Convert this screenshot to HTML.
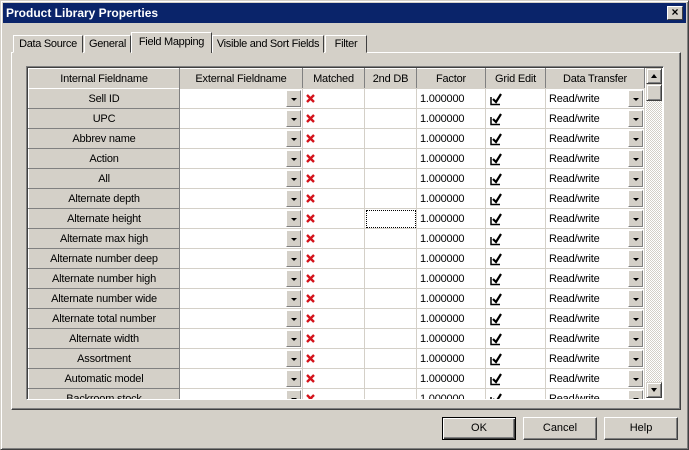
<!DOCTYPE html>
<html><head><style>
*{box-sizing:border-box;margin:0;padding:0}
body{width:689px;height:450px;background:#d4d0c8;font-family:"Liberation Sans",sans-serif;font-size:11px;color:#000;position:relative;overflow:hidden}
.win{position:absolute;left:0;top:0;width:689px;height:450px;border:1px solid #d4d0c8;border-right-color:#404040;border-bottom-color:#404040;box-shadow:inset 1px 1px #fff,inset -1px -1px #808080}
.title{position:absolute;left:3px;top:3px;width:683px;height:20px;background:#0a246a;color:#fff;font-weight:bold;font-size:12px;line-height:20px;padding-left:3px}
.close{position:absolute;left:667px;top:6px;width:16px;height:14px;background:#d4d0c8;border:1px solid;border-color:#fff #404040 #404040 #fff;font-size:12px;line-height:11px;text-align:center;color:#000;font-weight:bold}
.tab{position:absolute;top:35px;height:18px;border:1px solid;border-color:#fff #404040 transparent #fff;line-height:16px;text-align:center;background:#d4d0c8;white-space:nowrap;overflow:hidden;letter-spacing:-0.3px}
.panel{position:absolute;left:11px;top:52px;width:670px;height:358px;border:1px solid;border-color:#fff #404040 #404040 #fff;box-shadow:inset -1px -1px #808080}
.grid{position:absolute;left:26px;top:66px;width:638px;height:334px;border:1px solid;border-color:#808080 #fff #fff #808080;overflow:hidden;background:#fff}
.gin{position:absolute;left:0;top:0;width:636px;height:332px;border:1px solid #404040;border-right:none;border-bottom:none;overflow:hidden}
table{border-collapse:collapse;table-layout:fixed;position:absolute;left:0;top:0}
td{height:20px;border:1px solid #d4d0c8;padding:0;white-space:nowrap;overflow:hidden;position:relative;letter-spacing:-0.2px}
tr.h td{background:#d4d0c8;text-align:center;border-color:#fff #808080 #808080 #fff}
td.i{background:#d4d0c8;text-align:center;border-color:#fff #808080 #808080 #fff}
.dd{position:absolute;right:1px;top:1px;width:15px;height:17px;background:#d4d0c8;border:1px solid;border-color:#fff #808080 #808080 #fff}
.dd:after{content:"";position:absolute;left:4px;top:7px;border:3px solid transparent;border-top:3px solid #000;border-bottom:0}
.x{position:absolute;left:3px;top:5px}
.ck{position:absolute;left:4px;top:4px}
.t{padding-left:3px}
.sb{position:absolute;left:646px;top:68px;width:16px;height:330px;background:repeating-conic-gradient(#fff 0 25%,#d4d0c8 0 50%) 0 0/2px 2px}
.sbb{position:absolute;left:0;width:16px;height:16px;background:#d4d0c8;border:1px solid;border-color:#d4d0c8 #404040 #404040 #d4d0c8;box-shadow:inset 1px 1px #fff,inset -1px -1px #808080}
.btn{position:absolute;top:417px;width:74px;height:23px;background:#d4d0c8;border:1px solid;border-color:#fff #404040 #404040 #fff;box-shadow:inset -1px -1px #808080;text-align:center;line-height:21px;font-size:11px}
</style></head><body>
<div class="win"></div>
<div class="title">Product Library Properties</div>
<div class="close">×</div>
<div class="panel"></div>
<div class="tab" style="left:13px;width:70px">Data Source</div>
<div class="tab" style="left:84px;width:47px">General</div>
<div class="tab" style="left:131px;width:81px;top:32px;height:21px;border-bottom:none;z-index:2;line-height:18px">Field Mapping</div>
<div class="tab" style="left:212px;width:112px">Visible and Sort Fields</div>
<div class="tab" style="left:325px;width:42px">Filter</div>
<div class="grid"><div class="gin">
<table>
<colgroup><col style="width:151px"><col style="width:123px"><col style="width:62px"><col style="width:52px"><col style="width:69px"><col style="width:60px"><col style="width:99px"></colgroup>
<tr class="h"><td>Internal Fieldname</td><td>External Fieldname</td><td>Matched</td><td>2nd DB</td><td>Factor</td><td>Grid Edit</td><td>Data Transfer</td></tr>
</table>
<table id="b" style="top:20px">
<colgroup><col style="width:151px"><col style="width:123px"><col style="width:62px"><col style="width:52px"><col style="width:69px"><col style="width:60px"><col style="width:99px"></colgroup>
</table>
</div></div>
<div class="sb"><div class="sbb" style="top:0"><div style="position:absolute;left:4px;top:5px;border:3.5px solid transparent;border-bottom:4px solid #000;border-top:0"></div></div>
<div class="sbb" style="top:16px;height:17px"></div>
<div class="sbb" style="top:314px"><div style="position:absolute;left:4px;top:5px;border:3.5px solid transparent;border-top:4px solid #000;border-bottom:0"></div></div></div>
<div class="btn" style="left:442px;border:1px solid #000;box-shadow:inset 1px 1px #fff,inset -1px -1px #404040,inset -2px -2px #808080">OK</div>
<div class="btn" style="left:523px">Cancel</div>
<div class="btn" style="left:604px">Help</div>
<script>
var n=["Sell ID","UPC","Abbrev name","Action","All","Alternate depth","Alternate height","Alternate max high","Alternate number deep","Alternate number high","Alternate number wide","Alternate total number","Alternate width","Assortment","Automatic model","Backroom stock"];
var x='<svg class="x" width="9" height="9" viewBox="0 0 9 9"><path d="M1 1L8 8M8 1L1 8" stroke="#d4141c" stroke-width="2.4"/></svg>';
var c='<svg class="ck" width="13" height="13" viewBox="0 0 13 13"><path d="M1 4V11.5H10" stroke="#000" stroke-width="1.5" fill="none"/><path d="M3 6L6 9L11 1" stroke="#000" stroke-width="2.2" fill="none"/></svg>';
var h='';
n.forEach(function(s,i){h+='<tr><td class="i">'+s+'</td><td><div class="dd"></div></td><td>'+x+'</td><td'+(i==6?' style="outline:1px dotted #000;outline-offset:-2px"':'')+'></td><td class="t">1.000000</td><td>'+c+'</td><td class="t">Read/write<div class="dd"></div></td></tr>';});
document.getElementById('b').insertAdjacentHTML('beforeend',h);
</script>
</body></html>
